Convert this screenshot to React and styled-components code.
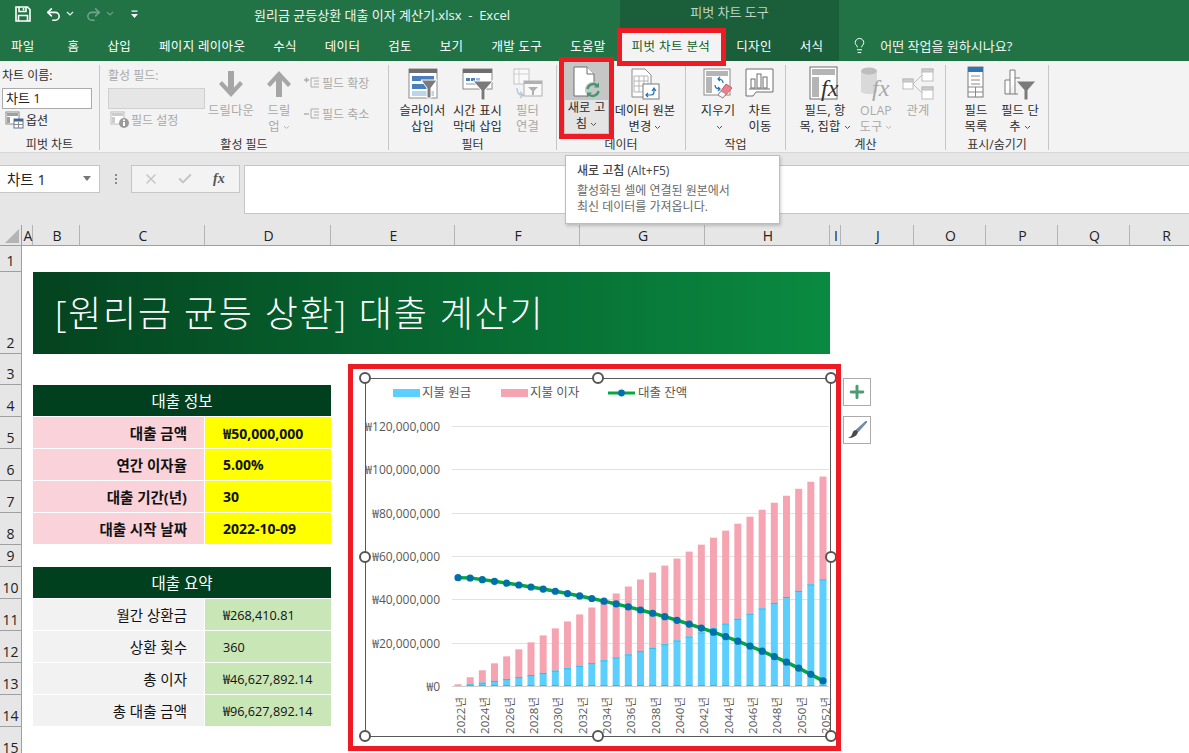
import React from "react";
import styled, { createGlobalStyle } from "styled-components";
import { Undo2, Redo2, Lightbulb, Plus, X, Check } from "lucide-react";

const FONT = `"Open Sans", "Noto Sans CJK KR", sans-serif`;
const DIM = "#a9a9a9";

const Global = createGlobalStyle`
  html, body { margin: 0; padding: 0; overflow: hidden; background: #fff; }
  * { box-sizing: border-box; }
  body { font-family: ${FONT}; }
`;

const Page = styled.div`
  position: relative;
  width: 1189px;
  height: 753px;
  overflow: hidden;
  display: flex;
  flex-direction: column;
`;

/* ---------- Green header ---------- */
const Header = styled.header`
  display: grid;
  grid-template-columns: 620px 219px 1fr;
  grid-template-rows: 33px 28px;
  background: #217346;
  color: #fff;
  flex: none;
`;
const TitleBar = styled.div`
  grid-column: 1;
  grid-row: 1;
  display: flex;
  align-items: center;
  padding: 0 0 5px 15px;
`;
const QuickBtn = styled.span`
  display: flex;
  align-items: center;
  width: ${(p) => p.$w}px;
  opacity: ${(p) => (p.$dim ? 0.35 : 1)};
`;
const Spacer = styled.span`
  width: 4px;
`;
const DocTitle = styled.div`
  margin-left: 115px;
  font-size: 13px;
  white-space: pre;
  color: #f2f7f4;
`;
const ContextBand = styled.div`
  grid-column: 2;
  grid-row: 1 / span 2;
  background: #1b5f3a;
  text-align: center;
  font-size: 13px;
  line-height: 25px;
  color: #bcd5c7;
`;
const Tabs = styled.nav`
  grid-column: 1 / -1;
  grid-row: 2;
  display: flex;
  align-items: stretch;
  z-index: 1;
`;
const Tab = styled.div`
  padding: 0 14px 4px;
  display: flex;
  align-items: center;
  font-size: 12.5px;
  letter-spacing: 0.3px;
  white-space: nowrap;
  ${(p) => p.$first && "padding-left: 11px; padding-right: 19px;"}
  ${(p) =>
    p.$active &&
    `background:#f3f3f3;color:#0f5c30;position:relative;z-index:2;outline:5px solid #ed1c24;margin-left:2px;margin-right:1px;padding:0 11px 3px 10px;letter-spacing:0.4px;`}
`;
const TellMe = styled.div`
  display: flex;
  align-items: center;
  gap: 12px;
  padding: 0 0 4px 14px;
  font-size: 13px;
  color: #f0f6f2;
`;

/* ---------- Ribbon ---------- */
const Ribbon = styled.section`
  display: flex;
  height: 92px;
  padding: 4px 0 3px;
  background: #f3f3f3;
  border-bottom: 1px solid #d6d6d6;
  flex: none;
`;
const Group = styled.div`
  width: ${(p) => p.$w}px;
  height: 85px;
  border-right: 1px solid #c6c6c6;
  display: flex;
  flex-direction: column;
  flex: none;
`;
const GroupBody = styled.div`
  height: 68px;
  display: flex;
  padding-left: ${(p) => p.$pl ?? 0}px;
`;
const GroupLabel = styled.div`
  height: 17px;
  line-height: 24px;
  text-align: center;
  font-size: 12px;
  color: #333;
`;
const Large = styled.div`
  width: ${(p) => p.$w}px;
  flex: none;
  display: flex;
  flex-direction: column;
  align-items: center;
  color: ${(p) => (p.$dim ? DIM : "#2b2b2b")};
  position: relative;
  ${(p) =>
    p.$hot &&
    `z-index:2;margin-top:-3px;height:72px;outline:5px solid #ed1c24;background:#e4e4e4;border:1px solid #c6c6c6;`}
`;
const LargeIcon = styled.div`
  height: ${(p) => (p.$hot ? 37 : 38)}px;
  width: 100%;
  display: flex;
  align-items: center;
  justify-content: center;
  flex: none;
  ${(p) => p.$hot && `background:#c6c6c6;`}
`;
const LargeText = styled.div`
  font-size: 12.3px;
  line-height: 16px;
  text-align: center;
  white-space: nowrap;
  letter-spacing: 0.15px;
`;
const Caret = styled.span`
  display: inline-block;
  margin-left: 3px;
  vertical-align: 1px;
  line-height: 0;
`;
const SideColumn = styled.div`
  width: ${(p) => p.$w}px;
  flex: none;
  display: flex;
  flex-direction: column;
  padding-left: ${(p) => p.$pl ?? 0}px;
`;
const RibbonCaption = styled.div`
  font-size: 12px;
  line-height: 21px;
  height: 23px;
  white-space: nowrap;
  color: ${(p) => (p.$dim ? DIM : "#2b2b2b")};
`;
const RibbonInput = styled.div`
  height: 21px;
  border: 1px solid ${(p) => (p.$dim ? "#d0d0d0" : "#ababab")};
  background: ${(p) => (p.$dim ? "#e6e6e6" : "#fff")};
  font-size: 13px;
  line-height: 19px;
  padding-left: 3px;
  color: #222;
  width: ${(p) => p.$w}px;
`;
const SmallRow = styled.div`
  display: flex;
  align-items: center;
  gap: 1px;
  height: 22px;
  margin-top: ${(p) => p.$mt ?? 0}px;
  font-size: 12px;
  white-space: nowrap;
  padding-left: ${(p) => p.$pl ?? 0}px;
  color: ${(p) => (p.$dim ? DIM : "#2b2b2b")};
`;

/* ---------- Formula bar ---------- */
const FormulaBar = styled.div`
  height: 72px;
  flex: none;
  background: #e6e6e6;
  padding-top: 12px;
  display: flex;
  align-items: flex-start;
`;
const NameBox = styled.div`
  width: 100px;
  height: 28px;
  background: #fff;
  border: 1px solid #c6c6c6;
  border-left: none;
  display: flex;
  align-items: center;
  justify-content: space-between;
  padding: 0 8px 2px 7px;
  font-size: 14.5px;
  color: #222;
`;
const Triangle = styled.i`
  width: 0;
  height: 0;
  border-left: 4px solid transparent;
  border-right: 4px solid transparent;
  border-top: 5px solid #777;
`;
const Grip = styled.div`
  width: 31px;
  height: 28px;
  display: flex;
  flex-direction: column;
  align-items: center;
  justify-content: center;
  gap: 2px;
  & > i { width: 2px; height: 2px; background: #8a8a8a; display: block; }
`;
const FxBox = styled.div`
  width: 109px;
  height: 28px;
  background: #f3f3f3;
  border: 1px solid #c6c6c6;
  display: flex;
  align-items: center;
  padding-left: 11px;
  gap: 18px;
  color: #c4c4c4;
`;
const FxMark = styled.span`
  font: italic 700 14px "Liberation Serif", serif;
  color: #555;
  margin-left: 2px;
`;
const FormulaInput = styled.div`
  flex: 1;
  margin-left: 4px;
  height: 49px;
  background: #fff;
  border: 1px solid #c6c6c6;
  border-right: none;
`;

/* ---------- Sheet ---------- */
const Sheet = styled.main`
  position: relative;
  flex: 1;
  overflow: hidden;
  background: #fff;
  display: grid;
  grid-template-columns: 22px 11px 47px 125px 126px 124px 125px 125px 125px 11px 73px 72px 72px 72px 72px;
  grid-template-rows: 21px 26px 82px 31px repeat(5, 32px) 22px repeat(5, 32px) 32px;
`;
const Corner = styled.div`
  grid-column: 1;
  grid-row: 1;
  background: #e6e6e6;
  border-right: 1px solid #9f9f9f;
  border-bottom: 1px solid #9f9f9f;
  position: relative;
  &::after {
    content: "";
    position: absolute;
    right: 2px;
    bottom: 2px;
    width: 0;
    height: 0;
    border-left: 14px solid transparent;
    border-bottom: 14px solid #b4b4b4;
  }
`;
const ColHead = styled.div`
  grid-column: ${(p) => p.$c};
  grid-row: 1;
  background: #e6e6e6;
  border-right: 1px solid #b4b4b4;
  border-bottom: 1px solid #9f9f9f;
  display: flex;
  justify-content: center;
  align-items: center;
  padding-left: 2px;
  font-size: 14px;
  color: #222;
`;
const RowHead = styled.div`
  grid-column: 1;
  grid-row: ${(p) => p.$r};
  background: #e6e6e6;
  border-right: 1px solid #9f9f9f;
  border-bottom: 1px solid #9f9f9f;
  display: flex;
  justify-content: center;
  align-items: flex-end;
  font-size: 14px;
  line-height: 20px;
  color: #222;
`;
const TitleCell = styled.div`
  grid-column: 3 / 10;
  grid-row: 3;
  background: linear-gradient(90deg, #04431f 0%, #0a8a41 100%);
  color: #fff;
  font-size: 36px;
  font-weight: 300;
  letter-spacing: 1.75px;
  display: flex;
  align-items: center;
  padding: 0 0 4px 22px;
  white-space: nowrap;
`;
const BlockHead = styled.div`
  grid-column: 3 / 6;
  grid-row: ${(p) => p.$r};
  background: #00401f;
  color: #fff;
  font-size: 15.5px;
  display: flex;
  align-items: center;
  justify-content: center;
  border-bottom: 1px solid #fff;
`;
const LabelCell = styled.div`
  grid-column: 3 / 5;
  grid-row: ${(p) => p.$r};
  background: ${(p) => (p.$tone === "input" ? "#fad2d9" : "#f2f2f2")};
  border-bottom: 1px solid #fff;
  border-right: 1px solid #fff;
  display: flex;
  align-items: center;
  justify-content: flex-end;
  padding-right: 17px;
  font-size: 14.5px;
  font-weight: ${(p) => (p.$tone === "input" ? 700 : 400)};
  color: #111;
`;
const ValueCell = styled.div`
  grid-column: 5;
  grid-row: ${(p) => p.$r};
  background: ${(p) => (p.$tone === "input" ? "#ffff00" : "#c9e6b6")};
  border-bottom: 1px solid #fff;
  display: flex;
  align-items: center;
  padding-left: 18px;
  font-size: ${(p) => (p.$tone === "input" ? 14 : 12.7)}px;
  font-weight: ${(p) => (p.$tone === "input" ? 700 : 400)};
  color: #111;
  white-space: nowrap;
`;

/* ---------- Overlays ---------- */
const ChartObject = styled.figure`
  position: absolute;
  left: 353px;
  top: 144px;
  width: 483px;
  height: 377px;
  margin: 0;
  outline: 5px solid #ed1c24;
  background: #fff;
  line-height: 0;
`;
const ChartTools = styled.div`
  position: absolute;
  left: 843px;
  top: 153px;
  display: flex;
  flex-direction: column;
  gap: 10px;
`;
const ToolBtn = styled.div`
  width: 28px;
  height: 28px;
  background: #fff;
  border: 1px solid #ababab;
  display: flex;
  align-items: center;
  justify-content: center;
`;
const Tooltip = styled.aside`
  position: absolute;
  left: 565px;
  top: 155px;
  width: 215px;
  height: 69px;
  z-index: 5;
  background: #fff;
  border: 1px solid #bdbdbd;
  box-shadow: 1px 2px 3px rgba(0, 0, 0, 0.18);
  padding: 6px 11px;
  font-size: 12px;
  color: #6a6a6a;
`;
const TipTitle = styled.div`
  font-weight: 500;
  color: #444;
  line-height: 18px;
  margin-bottom: 3px;
`;
const TipLine = styled.div`
  line-height: 16px;
  white-space: nowrap;
`;

/* ---------- Icons ---------- */
const SaveIcon = () => (
  <svg width="16" height="16" viewBox="0 0 16 16" fill="none" stroke="#fff" strokeWidth="1.6">
    <path d="M1 1h11.5L15 3.5V15H1z" />
    <path d="M4 1v4.5h7V1M3.5 15V9.5h9V15" />
    <path d="M8.5 2v2.5" />
  </svg>
);
const QatCaret = ({ dim }) => (
  <svg width="8" height="6" viewBox="0 0 8 6" fill="none" stroke="#fff" strokeWidth="1.2" opacity={dim ? 0.4 : 0.9}>
    <path d="M1 1l3 3 3-3" />
  </svg>
);
const Customize = () => (
  <svg width="9" height="9" viewBox="0 0 9 9" fill="#fff">
    <rect x="1.5" y="0.5" width="6" height="1.2" />
    <path d="M1 4h7L4.5 8z" />
  </svg>
);
const ArrowIcon = ({ up }) => (
  <svg width="26" height="28" viewBox="0 0 26 28" fill="#a6a6a6" style={{ transform: up ? "none" : "scaleY(-1)" }}>
    <path d="M13 1L25 14l-3 3-6-6.500V27h-6V10.500L4 17l-3-3z" />
  </svg>
);
const FieldStep = ({ plus }) => (
  <svg width="18" height="14" viewBox="0 0 18 14" fill="none" stroke="#ababab">
    <path d={plus ? "M1 4h5M3.500 1.500v5" : "M1 7h5"} strokeWidth="1.4" />
    <path d="M8 2h8M11 5h5M11 8h5M8 11h8M8 2v9" />
  </svg>
);
const OptionsIcon = ({ dim }) => (
  <svg width="20" height="18" viewBox="0 0 20 18" fill="none">
    <rect x="1" y="1" width="13" height="12" fill="#fff" stroke={dim ? "#bbb" : "#8a8a8a"} />
    <rect x="2" y="2" width="11" height="3" fill={dim ? "#ccc" : "#a0a0a0"} />
    <rect x="2" y="6" width="3" height="6" fill={dim ? "#ccc" : "#a0a0a0"} />
    {dim ? (
      <>
        <circle cx="14" cy="12" r="5" fill="#9a9a9a" />
        <rect x="13" y="11" width="2" height="4" fill="#fff" />
        <rect x="13" y="8.500" width="2" height="1.500" fill="#fff" />
      </>
    ) : (
      <>
        <rect x="9" y="8" width="9" height="9" fill="#fff" stroke="#5c7a99" />
        <rect x="9" y="8" width="9" height="2.500" fill="#44678f" />
        <path d="M13.500 11v6M9 13.500h9" stroke="#8a8a8a" />
      </>
    )}
  </svg>
);
const SlicerIcon = () => (
  <svg width="30" height="32" viewBox="0 0 30 32" fill="none">
    <rect x="1" y="1" width="28" height="29" fill="#fff" stroke="#8a8a8a" />
    <rect x="1" y="1" width="28" height="4" fill="#6e6e6e" />
    <rect x="4" y="8" width="22" height="5" fill="#4a7fbf" />
    <rect x="4" y="16" width="16" height="5" fill="#4a7fbf" />
    <rect x="4" y="23" width="22" height="5" fill="#bcd5ea" />
    <path d="M13 12h16l-6 8v10h-4V20z" fill="#7a7a7a" stroke="#fff" />
  </svg>
);
const TimelineIcon = () => (
  <svg width="32" height="34" viewBox="0 0 32 34" fill="none">
    <rect x="1" y="2" width="29" height="20" fill="#fff" stroke="#8a8a8a" />
    <rect x="1" y="2" width="29" height="4" fill="#6e6e6e" />
    <rect x="4" y="11" width="4" height="3" fill="#4a7fbf" />
    <rect x="9" y="11" width="4" height="3" fill="#4a7fbf" />
    <rect x="14" y="11" width="4" height="3" fill="#9bbce0" />
    <rect x="4" y="16" width="22" height="2" fill="#c8c8c8" />
    <path d="M11 14h20l-8 9v10h-4V23z" fill="#7a7a7a" stroke="#fff" />
  </svg>
);
const FilterLinkIcon = () => (
  <svg width="30" height="32" viewBox="0 0 30 32" fill="none" opacity="0.55">
    <rect x="1" y="1" width="15" height="15" fill="#fff" stroke="#9a9a9a" />
    <path d="M1 6h15M6 1v15" stroke="#b5b5b5" />
    <rect x="11" y="13" width="18" height="15" fill="#fff" stroke="#7a7a7a" />
    <rect x="11" y="13" width="18" height="3" fill="#7a7a7a" />
    <path d="M15 19h10l-4 4v4h-2v-4z" fill="#7a7a7a" />
    <path d="M4 20c0 5 2 7 5 7M7 24l3 3-3 3" stroke="#7a9bc0" strokeWidth="1.300" />
  </svg>
);
const RefreshIcon = () => (
  <svg width="30" height="32" viewBox="0 0 30 32" fill="none">
    <path d="M2 1h13l7 7v22H2z" fill="#fff" stroke="#6e6e6e" />
    <path d="M15 1v7h7" fill="#fff" stroke="#6e6e6e" />
    <circle cx="21" cy="24" r="8" fill="#c6c6c6" />
    <path d="M15.500 23a5.800 5.800 0 0 1 10-3" stroke="#3d9a73" strokeWidth="2.400" />
    <path d="M27 16.500v5h-5z" fill="#3d9a73" />
    <path d="M26.500 25a5.800 5.800 0 0 1-10 3" stroke="#3d9a73" strokeWidth="2.400" />
    <path d="M15 31.500v-5h5z" fill="#3d9a73" />
  </svg>
);
const ChangeSourceIcon = () => (
  <svg width="30" height="32" viewBox="0 0 30 32" fill="none">
    <path d="M2 1h13l6 6v22H2z" fill="#fff" stroke="#8a8a8a" />
    <path d="M4 8h14v16H4zM4 13h14M4 18h14M9 8v16M14 8v16" stroke="#b5b5b5" />
    <rect x="13" y="16" width="16" height="15" fill="#fff" stroke="#7a7a7a" />
    <path d="M17 27h4c2 0 3-1 3-3v-3M22 23l2-3 2 3M18 25l-2 2 2 2" stroke="#1f6fb5" strokeWidth="1.200" />
  </svg>
);
const ClearIcon = () => (
  <svg width="30" height="32" viewBox="0 0 30 32" fill="none">
    <rect x="1" y="1" width="26" height="26" fill="#fff" stroke="#8a8a8a" />
    <rect x="3" y="3" width="22" height="5" fill="#b5b5b5" />
    <rect x="3" y="9" width="6" height="16" fill="#b5b5b5" />
    <path d="M12 17c0 3 2 4 5 4M15 19l2 2-2 2M20 15c0-3-2-4-5-4M17 13l-2-2 2-2" stroke="#1f6fb5" strokeWidth="1.200" />
    <path d="M20 30l-5-3 8-11 6 4z" fill="#ef7d8a" stroke="#c95a6a" />
    <path d="M15 27l3-4 5 3-3 4z" fill="#f6f6f6" stroke="#999" />
  </svg>
);
const MoveChartIcon = () => (
  <svg width="30" height="32" viewBox="0 0 30 32" fill="none">
    <path d="M1 1h27v23H11l-3 4H1z" fill="#fff" stroke="#6e6e6e" />
    <rect x="6" y="11" width="4" height="9" stroke="#6e6e6e" />
    <rect x="12" y="6" width="4" height="14" stroke="#6e6e6e" />
    <rect x="18" y="9" width="4" height="11" stroke="#6e6e6e" />
    <path d="M4 21h21" stroke="#6e6e6e" />
  </svg>
);
const FieldFxIcon = () => (
  <svg width="32" height="36" viewBox="0 0 32 36" fill="none">
    <rect x="1" y="1" width="27" height="32" fill="#fff" stroke="#6e6e6e" />
    <rect x="3" y="3" width="23" height="6" fill="#b5b5b5" />
    <rect x="3" y="11" width="7" height="20" fill="#b5b5b5" />
    <text x="12" y="30" fontFamily="Liberation Serif, serif" fontStyle="italic" fontWeight="400" fontSize="24" fill="#333">fx</text>
  </svg>
);
const OlapIcon = () => (
  <svg width="32" height="36" viewBox="0 0 32 36" fill="none">
    <path d="M1 5v20c0 4 16 4 16 0V5z" fill="#d9d9d9" />
    <ellipse cx="9" cy="5" rx="8" ry="3.500" fill="#bdbdbd" />
    <text x="12" y="30" fontFamily="Liberation Serif, serif" fontStyle="italic" fontWeight="400" fontSize="24" fill="#a8a8a8">fx</text>
  </svg>
);
const RelationIcon = () => (
  <svg width="32" height="34" viewBox="0 0 32 34" fill="none" stroke="#bdbdbd">
    <rect x="1" y="12" width="10" height="10" fill="#fff" />
    <rect x="1" y="12" width="10" height="3" fill="#ccc" />
    <rect x="20" y="2" width="11" height="12" fill="#fff" />
    <rect x="20" y="2" width="11" height="3" fill="#ccc" />
    <rect x="20" y="20" width="11" height="12" fill="#fff" />
    <rect x="20" y="20" width="11" height="3" fill="#ccc" />
    <path d="M11 17l9-9M11 17l9 9" />
  </svg>
);
const FieldListIcon = () => (
  <svg width="22" height="36" viewBox="0 0 22 36" fill="none">
    <rect x="3" y="1" width="15" height="30" fill="#fff" stroke="#7a7a7a" />
    <rect x="3" y="1" width="15" height="5" fill="#2f75b5" />
    <path d="M6 10h9M6 14h9M6 18h9M3 21h15M3 26h15M10.500 21v10" stroke="#8a8a8a" />
  </svg>
);
const FieldButtonsIcon = () => (
  <svg width="34" height="34" viewBox="0 0 34 34" fill="none">
    <path d="M2 27V13h5V3h5v8h5" fill="#fff" stroke="#7a7a7a" />
    <path d="M2 27h13M7 13v14M12 11v16" stroke="#7a7a7a" />
    <path d="M13 14h20l-8 9v10h-4V23z" fill="#7a7a7a" stroke="#f3f3f3" />
  </svg>
);
const LargeCaret = ({ dim }) => (
  <Caret>
    <svg width="7" height="5" viewBox="0 0 7 5" fill="none" stroke={dim ? "#b5b5b5" : "#555"}>
      <path d="M1 1l2.500 2.500L6 1" />
    </svg>
  </Caret>
);
const BrushIcon = () => (
  <svg width="22" height="22" viewBox="0 0 22 22" fill="none">
    <path d="M20 2l1 1-9 10-2-2z" fill="#6d8fb5" stroke="#4a6a8f" strokeWidth="0.600" />
    <path d="M10 11l2 2c-1 4-5 6-10 6 3-1 4-3 4.500-5 .5-2 2-3 3.500-3z" fill="#4a4a4a" />
  </svg>
);

/* ---------- Chart ---------- */
const buildSeries = () => {
  const r = 0.05 / 12;
  const pmt = 268410.81;
  let balance = 50000000;
  const ledger = [];
  for (let m = 0; m < 360; m++) {
    const interest = balance * r;
    const principal = pmt - interest;
    ledger.push({ before: balance, principal, interest });
    balance -= principal;
  }
  const years = [];
  let count = 3;
  for (let year = 2022; year <= 2052; year++) {
    const start = ledger[Math.max(count - (year === 2022 ? 3 : 12), 0)].before;
    const paid = ledger.slice(0, Math.min(count, 360));
    const lagged = ledger.slice(0, Math.max(Math.min(count, 360) - 3, 0));
    years.push({
      year,
      start,
      principal: lagged.reduce((s, e) => s + e.principal, 0),
      total: paid.length * pmt,
    });
    count += 12;
  }
  return years;
};
const SERIES = buildSeries();
const Y0 = 686;
const PX = 43.35 / 20000000;
const xOf = (i) => 458 + i * (365 / 30);
const yOf = (v) => Y0 - v * PX;
const AXIS = { fontFamily: FONT, fontSize: 12, fill: "#595959" };
const GREEN_LINE = "#00a83f";
const HANDLES = [
  [365, 378], [598, 378], [831, 378],
  [365, 557], [831, 557],
  [365, 736], [598, 736], [831, 736],
];

const Chart = () => (
  <svg width="483" height="377" viewBox="353 369 483 377" style={{ display: "block" }}>
    <rect x="365.500" y="378.500" width="465" height="358" fill="#fff" stroke="#595959" />
    {[0, 20, 40, 60, 80, 100, 120].map((m) => {
      const y = Math.round(yOf(m * 1000000)) + 0.5;
      return (
        <g key={m}>
          <line x1="452" x2="829" y1={y} y2={y} stroke={m === 0 ? "#d0d0d0" : "#e2e2e2"} />
          <text x="440" y={y + 4} textAnchor="end" {...AXIS}>
            ₩{m === 0 ? "0" : `${m},000,000`}
          </text>
        </g>
      );
    })}
    {SERIES.map((d, i) => {
      const x = xOf(i) - 3.5;
      const top = yOf(d.principal);
      const peak = yOf(d.total);
      return (
        <g key={d.year}>
          <rect x={x} y={peak} width="7" height={top - peak} fill="#f6a4b1" />
          <rect x={x} y={top} width="7" height={Y0 - top} fill="#5ccfff" />
          {d.principal > 0 && (
            <>
              <rect x={x} y={top} width="7" height="1" fill="#1fc3f2" />
              <rect x={x} y={Y0 - 1} width="7" height="1" fill="#1fc3f2" />
            </>
          )}
        </g>
      );
    })}
    <polyline
      points={SERIES.map((d, i) => `${xOf(i)},${yOf(d.start)}`).join(" ")}
      fill="none"
      stroke={GREEN_LINE}
      strokeWidth="3.500"
    />
    {SERIES.map((d, i) => (
      <circle key={d.year} cx={xOf(i)} cy={yOf(d.start)} r="3.600" fill="#0070ad" />
    ))}
    {SERIES.filter((d) => d.year % 2 === 0).map((d) => {
      const x = xOf(d.year - 2022) + 7;
      return (
        <text key={d.year} transform={`translate(${x} 697) rotate(-90)`} textAnchor="end" {...AXIS} fontSize="11.500">
          {d.year}년
        </text>
      );
    })}
    <rect x="393" y="389" width="27" height="8" fill="#5ccfff" />
    <text x="422" y="397" {...AXIS} fontSize="12.500">지불 원금</text>
    <rect x="501" y="389" width="27" height="8" fill="#f6a4b1" />
    <text x="530" y="397" {...AXIS} fontSize="12.500">지불 이자</text>
    <line x1="608" x2="635" y1="393" y2="393" stroke={GREEN_LINE} strokeWidth="3" />
    <circle cx="621.500" cy="393" r="3.400" fill="#0070ad" />
    <text x="638" y="397" {...AXIS} fontSize="12.500">대출 잔액</text>
    {HANDLES.map(([x, y]) => (
      <circle key={`${x}-${y}`} cx={x} cy={y} r="5" fill="#fff" stroke="#555" strokeWidth="2" />
    ))}
  </svg>
);

/* ---------- Data ---------- */
const TAB_NAMES = ["홈", "삽입", "페이지 레이아웃", "수식", "데이터", "검토", "보기", "개발 도구", "도움말"];
const COLS = ["A", "B", "C", "D", "E", "F", "G", "H", "I", "J", "O", "P", "Q", "R"];
const ROWS = Array.from({ length: 15 }, (_, i) => i + 1);
const INPUTS = [
  ["대출 금액", "₩50,000,000"],
  ["연간 이자율", "5.00%"],
  ["대출 기간(년)", "30"],
  ["대출 시작 날짜", "2022-10-09"],
];
const SUMMARY = [
  ["월간 상환금", "₩268,410.81"],
  ["상환 횟수", "360"],
  ["총 이자", "₩46,627,892.14"],
  ["총 대출 금액", "₩96,627,892.14"],
];

const Btn = ({ w, icon, lines, dim, hot, caret }) => (
  <Large $w={w} $dim={dim} $hot={hot}>
    <LargeIcon $hot={hot}>{icon}</LargeIcon>
    <LargeText>
      {lines[0]}
      <br />
      {lines[1]}
      {caret && <LargeCaret dim={dim} />}
    </LargeText>
  </Large>
);

export default function App() {
  return (
    <Page>
      <Global />
      <Header>
        <TitleBar>
          <QuickBtn $w={30}><SaveIcon /></QuickBtn>
          <QuickBtn $w={40}>
            <Undo2 size={17} color="#fff" strokeWidth={2.2} />
            <Spacer />
            <QatCaret />
          </QuickBtn>
          <QuickBtn $w={45} $dim>
            <Redo2 size={17} color="#fff" strokeWidth={2.2} />
            <Spacer />
            <QatCaret />
          </QuickBtn>
          <Customize />
          <DocTitle>원리금 균등상환 대출 이자 계산기.xlsx  -  Excel</DocTitle>
        </TitleBar>
        <ContextBand>피벗 차트 도구</ContextBand>
        <Tabs>
          <Tab $first>파일</Tab>
          {TAB_NAMES.map((t) => (
            <Tab key={t}>{t}</Tab>
          ))}
          <Tab $active>피벗 차트 분석</Tab>
          <Tab>디자인</Tab>
          <Tab>서식</Tab>
          <TellMe>
            <Lightbulb size={17} color="#fff" strokeWidth={1.4} />
            어떤 작업을 원하시나요?
          </TellMe>
        </Tabs>
      </Header>

      <Ribbon>
        <Group $w={100}>
          <GroupBody>
            <SideColumn $w={99} $pl={2}>
              <RibbonCaption>차트 이름:</RibbonCaption>
              <RibbonInput $w={90}>차트 1</RibbonInput>
              <SmallRow $pl={3}><OptionsIcon />옵션</SmallRow>
            </SideColumn>
          </GroupBody>
          <GroupLabel>피벗 차트</GroupLabel>
        </Group>
        <Group $w={289}>
          <GroupBody $pl={8}>
            <SideColumn $w={99}>
              <RibbonCaption $dim>활성 필드:</RibbonCaption>
              <RibbonInput $dim $w={97} />
              <SmallRow $dim $pl={2}><OptionsIcon dim />필드 설정</SmallRow>
            </SideColumn>
            <Btn w={48} dim icon={<ArrowIcon />} lines={["드릴다운", "\u00a0"]} />
            <Btn w={48} dim icon={<ArrowIcon up />} lines={["드릴", "업"]} caret />
            <SideColumn $w={86}>
              <SmallRow $dim $mt={7}><FieldStep plus />필드 확장</SmallRow>
              <SmallRow $dim $mt={9}><FieldStep />필드 축소</SmallRow>
            </SideColumn>
          </GroupBody>
          <GroupLabel>활성 필드</GroupLabel>
        </Group>
        <Group $w={168}>
          <GroupBody $pl={6}>
            <Btn w={55} icon={<SlicerIcon />} lines={["슬라이서", "삽입"]} />
            <Btn w={55} icon={<TimelineIcon />} lines={["시간 표시", "막대 삽입"]} />
            <Btn w={45} dim icon={<FilterLinkIcon />} lines={["필터", "연결"]} />
          </GroupBody>
          <GroupLabel>필터</GroupLabel>
        </Group>
        <Group $w={129}>
          <GroupBody $pl={7}>
            <Btn w={45} hot icon={<RefreshIcon />} lines={["새로 고", "침"]} caret />
            <Btn w={72} icon={<ChangeSourceIcon />} lines={["데이터 원본", "변경"]} caret />
          </GroupBody>
          <GroupLabel>데이터</GroupLabel>
        </Group>
        <Group $w={100}>
          <GroupBody $pl={10}>
            <Btn w={44} icon={<ClearIcon />} lines={["지우기", ""]} caret />
            <Btn w={40} icon={<MoveChartIcon />} lines={["차트", "이동"]} />
          </GroupBody>
          <GroupLabel>작업</GroupLabel>
        </Group>
        <Group $w={160}>
          <GroupBody $pl={10}>
            <Btn w={58} icon={<FieldFxIcon />} lines={["필드, 항", "목, 집합"]} caret />
            <Btn w={44} dim icon={<OlapIcon />} lines={["OLAP", "도구"]} caret />
            <Btn w={40} dim icon={<RelationIcon />} lines={["관계", "\u00a0"]} />
          </GroupBody>
          <GroupLabel>계산</GroupLabel>
        </Group>
        <Group $w={103}>
          <GroupBody $pl={8}>
            <Btn w={44} icon={<FieldListIcon />} lines={["필드", "목록"]} />
            <Btn w={44} icon={<FieldButtonsIcon />} lines={["필드 단", "추"]} caret />
          </GroupBody>
          <GroupLabel>표시/숨기기</GroupLabel>
        </Group>
      </Ribbon>

      <FormulaBar>
        <NameBox>차트 1<Triangle /></NameBox>
        <Grip><i /><i /><i /></Grip>
        <FxBox>
          <X size={16} strokeWidth={2} />
          <Check size={16} strokeWidth={3} />
          <FxMark>fx</FxMark>
        </FxBox>
        <FormulaInput />
      </FormulaBar>

      <Sheet>
        <Corner />
        {COLS.map((c, i) => (
          <ColHead key={c} $c={i + 2}>{c}</ColHead>
        ))}
        {ROWS.map((r) => (
          <RowHead key={r} $r={r + 1}>{r}</RowHead>
        ))}
        <TitleCell>[원리금 균등 상환] 대출 계산기</TitleCell>
        <BlockHead $r={5}>대출 정보</BlockHead>
        {INPUTS.map(([l, v], i) => (
          <React.Fragment key={l}>
            <LabelCell $r={6 + i} $tone="input">{l}</LabelCell>
            <ValueCell $r={6 + i} $tone="input">{v}</ValueCell>
          </React.Fragment>
        ))}
        <BlockHead $r={11}>대출 요약</BlockHead>
        {SUMMARY.map(([l, v], i) => (
          <React.Fragment key={l}>
            <LabelCell $r={12 + i}>{l}</LabelCell>
            <ValueCell $r={12 + i}>{v}</ValueCell>
          </React.Fragment>
        ))}
        <ChartObject><Chart /></ChartObject>
        <ChartTools>
          <ToolBtn><Plus size={20} color="#4f9a76" strokeWidth={3.5} /></ToolBtn>
          <ToolBtn><BrushIcon /></ToolBtn>
        </ChartTools>
      </Sheet>

      <Tooltip>
        <TipTitle>새로 고침 (Alt+F5)</TipTitle>
        <TipLine>활성화된 셀에 연결된 원본에서</TipLine>
        <TipLine>최신 데이터를 가져옵니다.</TipLine>
      </Tooltip>
    </Page>
  );
}
